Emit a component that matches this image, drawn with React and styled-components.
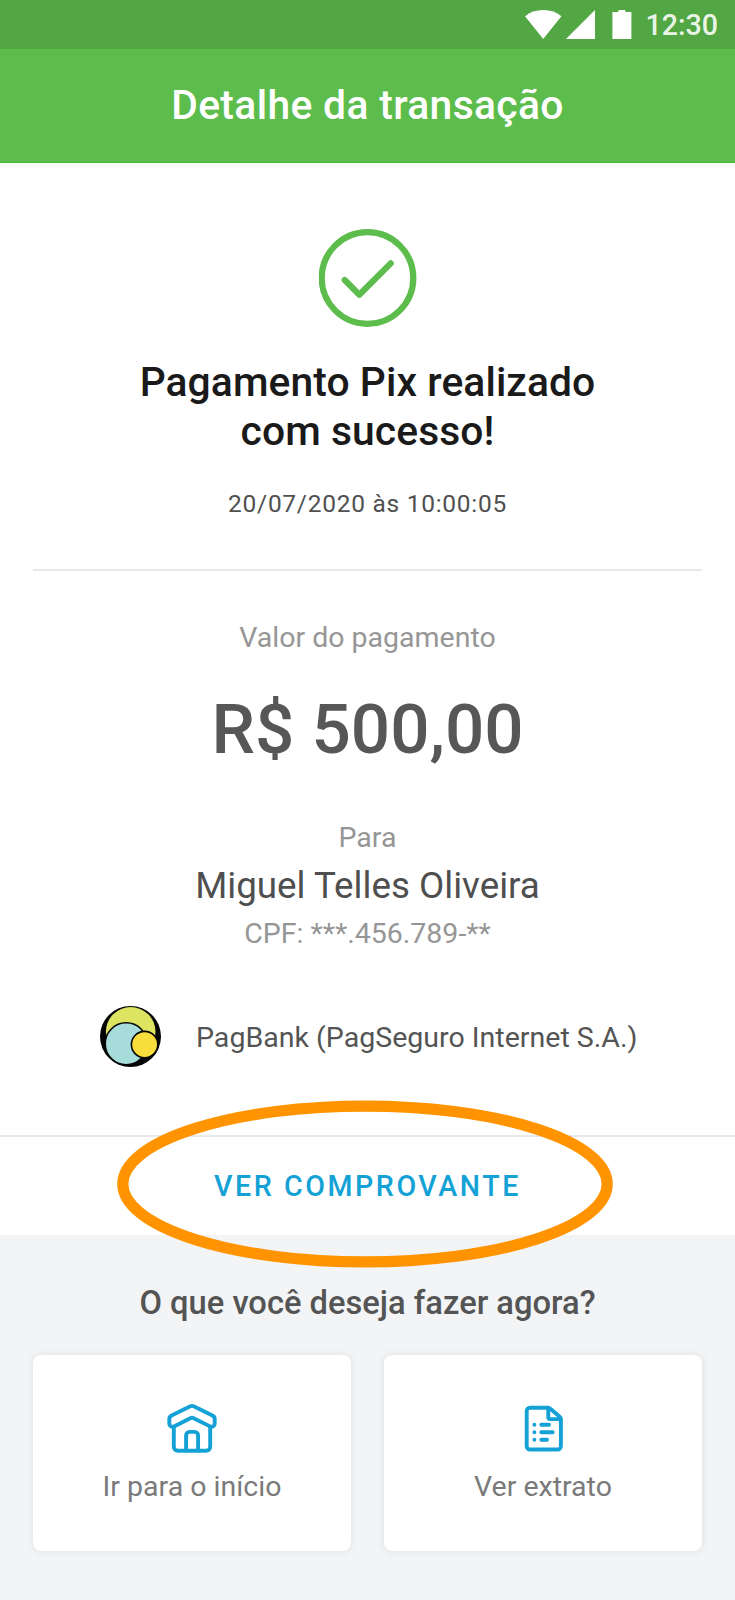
import React from "react";
import styled, { createGlobalStyle } from "styled-components";

const GlobalStyle = createGlobalStyle`
  :root {
    --green: #5dbd4c;
    --green-dark: #52a744;
    --blue: #14a2d6;
    --line: #e7e8e9;
    --mist: #f2f4f6;
    --white: #ffffff;
  }

  * {
    box-sizing: border-box;
  }

  body {
    margin: 0;
    background-color: var(--mist);
    font-family: Roboto, "Liberation Sans", sans-serif;
  }
`;

function StatusIcons() {
  return (
    <StatusSvg viewBox="0 0 108 30" fill="#ffffff">
      <path d="M0 6.2C5 2 11 0 18.2 0s13.2 2 18.2 6.2L18.2 29z" />
      <path d="M70 0v29H41z" />
      <path d="M87.4 2h6V0h7v2h6v27h-19z" />
    </StatusSvg>
  );
}

function CheckIcon() {
  return (
    <CheckSvg viewBox="0.5 0 98 98" fill="none" stroke="#5dbd4c" strokeWidth="6.2">
      <circle cx="49" cy="49" r="45.8" />
      <path d="M26.2 51l14.6 14.7 31.4-31.3" strokeLinecap="round" strokeLinejoin="round" />
    </CheckSvg>
  );
}

function BankLogo() {
  return (
    <LogoSvg viewBox="0 0 61 61">
      <circle cx="30.5" cy="30.5" r="30.5" fill="#050505" />
      <circle cx="30.7" cy="25.8" r="24.8" fill="#dde461" />
      <circle cx="26.2" cy="37.8" r="21" fill="#a6dcda" stroke="#050505" strokeWidth="1.6" />
      <circle cx="44.6" cy="38.6" r="13.2" fill="#f8dd3d" stroke="#050505" strokeWidth="1.6" />
    </LogoSvg>
  );
}

function HomeIcon() {
  return (
    <ActionSvg viewBox="0.5 0 49 49">
      <path d="M22.8 2.3a3.6 3.6 0 0 1 3.4 0L44.9 11.5a4 4 0 0 1 2.3 3.6v4.4a3.2 3.2 0 0 1-4.7 2.9L26.2 14.2a3.6 3.6 0 0 0-3.4 0L6.5 22.4a3.2 3.2 0 0 1-4.7-2.900v-4.400a4 4 0 0 1 2.300-3.600z" />
      <path d="M6.300 23v19.800a4 4 0 0 0 4 4h28.400a4 4 0 0 0 4-4V23" />
      <path d="M18.600 46.500V31.500a3.600 3.600 0 0 1 3.600-3.600h4.800a3.600 3.600 0 0 1 3.600 3.600v15" />
    </ActionSvg>
  );
}

function StatementIcon() {
  return (
    <ActionSvg viewBox="0 0 49 49">
      <path d="M28.8 3.7H11a3.3 3.3 0 0 0-3.3 3.3v35.2a3.3 3.3 0 0 0 3.3 3.3h27.6a3.3 3.3 0 0 0 3.3-3.3V15.2c0-1-.4-1.8-1.2-2.5l-9.3-7.9a4 4 0 0 0-2.6-1.1z" />
      <path d="M29.3 4.2v9.2a1.7 1.7 0 0 0 1.7 1.7h10.5" />
      <path d="M22.3 20.8h7.7M22.3 28.3h11.4M22.3 35.8h5.7" />
      <path d="M15.4 20.8h.01M15.4 28.3h.01M15.4 35.8h.01" />
    </ActionSvg>
  );
}

function ActionCard({ icon, label }) {
  return (
    <Card>
      {icon}
      <CardLabel>{label}</CardLabel>
    </Card>
  );
}

class App extends React.Component {
  render() {
    return (
      <Screen>
        <GlobalStyle />
        <StatusBar>
          <StatusIcons />
          <Clock>12:30</Clock>
        </StatusBar>
        <Header>
          <HeaderTitle>Detalhe da transação</HeaderTitle>
        </Header>
        <Receipt>
          <CheckIcon />
          <Heading>
            Pagamento Pix realizado
            <br />
            com sucesso!
          </Heading>
          <DateTime>20/07/2020 às 10:00:05</DateTime>
          <Divider />
          <Caption $top={46}>Valor do pagamento</Caption>
          <Amount>R$ 500,00</Amount>
          <Caption $top={46}>Para</Caption>
          <Payee>Miguel Telles Oliveira</Payee>
          <Caption $top={3}>CPF: ***.456.789-**</Caption>
          <Bank>
            <BankLogo />
            <BankName>PagBank (PagSeguro Internet S.A.)</BankName>
          </Bank>
        </Receipt>
        <ReceiptAction>
          <ReceiptButton>VER COMPROVANTE</ReceiptButton>
          <Highlight viewBox="0 0 496 168">
            <ellipse cx="248" cy="84" rx="242.2" ry="77.9" />
          </Highlight>
        </ReceiptAction>
        <Footer>
          <FooterTitle>O que você deseja fazer agora?</FooterTitle>
          <Cards>
            <ActionCard icon={<HomeIcon />} label="Ir para o início" />
            <ActionCard icon={<StatementIcon />} label="Ver extrato" />
          </Cards>
        </Footer>
      </Screen>
    );
  }
}

const Screen = styled.div`
  width: 735px;
  height: 1600px;
  display: flex;
  flex-direction: column;
  background-color: var(--white);
  overflow: hidden;
`;

const StatusBar = styled.div`
  height: 49px;
  padding-right: 17px;
  display: flex;
  align-items: center;
  justify-content: flex-end;
  background-color: var(--green-dark);
`;

const StatusSvg = styled.svg`
  width: 108px;
  height: 30px;
  margin-right: 12px;
`;

const Clock = styled.div`
  padding-top: 2px;
  color: rgba(255, 255, 255, 0.9);
  font-size: 28.6px;
  font-weight: 500;
  line-height: 41px;
  white-space: nowrap;
`;

const Header = styled.div`
  height: 114px;
  display: flex;
  align-items: center;
  justify-content: center;
  background-color: var(--green);
  border-bottom: 1px solid #4bb738;
`;

const HeaderTitle = styled.h1`
  margin: 0;
  color: var(--white);
  font-size: 40.8px;
  font-weight: 500;
  letter-spacing: 0.35px;
  line-height: 49px;
  white-space: nowrap;
`;

const Receipt = styled.div`
  height: 972px;
  padding: 66px 33px 0;
  display: flex;
  flex-direction: column;
  align-items: center;
`;

const CheckSvg = styled.svg`
  width: 98px;
  height: 98px;
  flex-shrink: 0;
`;

const Heading = styled.h2`
  margin: 31px 0 0;
  color: #1a1a1a;
  font-size: 40.8px;
  font-weight: 500;
  letter-spacing: 0.08px;
  line-height: 49px;
  text-align: center;
  white-space: nowrap;
`;

const DateTime = styled.div`
  margin-top: 31px;
  color: #505050;
  font-size: 24.5px;
  letter-spacing: 0.72px;
  line-height: 33px;
  white-space: nowrap;
`;

const Divider = styled.div`
  width: 100%;
  height: 2px;
  flex-shrink: 0;
  margin-top: 49px;
  background-color: var(--line);
`;

const Caption = styled.div`
  margin-top: ${(props) => props.$top}px;
  color: #969696;
  font-size: 28.5px;
  line-height: 41px;
  white-space: nowrap;
`;

const Amount = styled.div`
  margin-top: 31px;
  color: #575757;
  font-size: 69.2px;
  font-weight: 500;
  line-height: 82px;
  white-space: nowrap;
`;

const Payee = styled.div`
  margin-top: 3px;
  color: #4f4f4f;
  font-size: 36.75px;
  line-height: 49px;
  white-space: nowrap;
`;

const Bank = styled.div`
  width: 100%;
  margin-top: 52px;
  padding-left: 67px;
  display: flex;
  align-items: center;
`;

const LogoSvg = styled.svg`
  width: 61px;
  height: 61px;
  margin-right: 35px;
`;

const BankName = styled.div`
  padding-top: 2px;
  color: #545454;
  font-size: 28.55px;
  line-height: 41px;
  white-space: nowrap;
`;

const ReceiptAction = styled.div`
  position: relative;
  height: 100px;
  display: flex;
  align-items: center;
  justify-content: center;
  border-top: 2px solid var(--line);
`;

const ReceiptButton = styled.button`
  padding: 0;
  border: 0;
  background: none;
  color: var(--blue);
  font-family: inherit;
  font-size: 28.6px;
  font-weight: 500;
  letter-spacing: 2.55px;
  line-height: 41px;
  white-space: nowrap;
`;

const Highlight = styled.svg`
  position: absolute;
  top: -37px;
  left: 117px;
  width: 496px;
  height: 168px;
  fill: none;
  stroke: #ff9400;
  stroke-width: 11.2;
  pointer-events: none;
`;

const Footer = styled.div`
  flex: 1;
  padding: 44px 33px 0;
  background-color: var(--mist);
`;

const FooterTitle = styled.h3`
  margin: 0;
  color: #545454;
  font-size: 32.7px;
  font-weight: 500;
  line-height: 49px;
  text-align: center;
  white-space: nowrap;
`;

const Cards = styled.div`
  margin-top: 27px;
  display: grid;
  grid-template-columns: 1fr 1fr;
  gap: 33px;
`;

const Card = styled.div`
  height: 196px;
  padding-top: 49px;
  display: flex;
  flex-direction: column;
  align-items: center;
  background-color: var(--white);
  border-radius: 8px;
  box-shadow: 0 0 8px rgba(0, 0, 0, 0.09);
`;

const ActionSvg = styled.svg`
  width: 49px;
  height: 49px;
  overflow: visible;
  fill: none;
  stroke: var(--blue);
  stroke-width: 3.9;
  stroke-linecap: round;
  stroke-linejoin: round;
`;

const CardLabel = styled.div`
  margin-top: 13px;
  color: #7a7a7a;
  font-size: 28.5px;
  line-height: 41px;
  white-space: nowrap;
`;

export default App;
